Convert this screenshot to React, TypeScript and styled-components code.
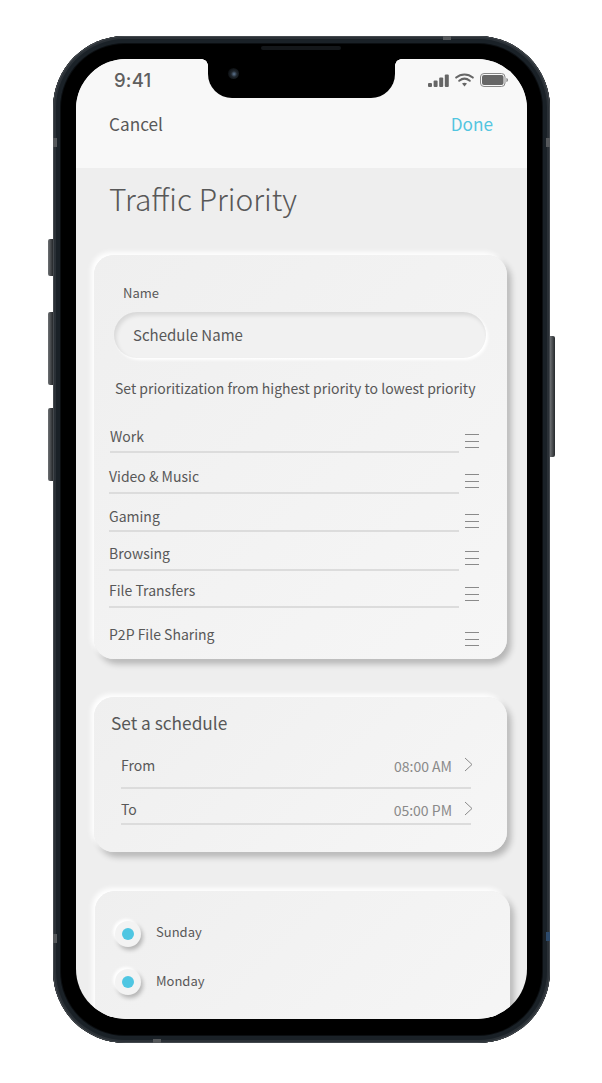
// Traffic priority schedule screen inside a phone mockup
import React from 'react';
import styled, { createGlobalStyle } from 'styled-components';

// Styles
const GlobalStyle = createGlobalStyle`
  html, body {
    margin: 0;
    padding: 0;
    background: #ffffff;
  }
`;

const Page = styled.div`
  width: 602px;
  height: 1083px;
  padding: 36px 0 0 53px;
  box-sizing: border-box;
  overflow: hidden;
  font-family: "Noto Sans CJK SC", "Noto Sans", sans-serif;
  color: #585858;
`;

const Phone = styled.div`
  position: relative;
  width: 497px;
  height: 1007px;
  box-sizing: border-box;
  padding: 23px;
  border-radius: 72px;
  background: #000000;
  box-shadow: inset 0 0 0 1px #43484d, inset 0 0 0 3px #2a3036, inset 0 0 0 7px #1a2127, inset 0 0 0 8px #0b0e11;
`;

const SideButton = styled.div<{ $side: 'left' | 'right'; $top: number; $height: number }>`
  position: absolute;
  top: ${p => p.$top}px;
  ${p => p.$side}: -5px;
  width: 5px;
  height: ${p => p.$height}px;
  border-radius: ${p => (p.$side === 'left' ? '2px 0 0 2px' : '0 2px 2px 0')};
  background: linear-gradient(90deg, #6d7073, #25282b);
`;

const Band = styled.div<{ $top?: number; $left?: number; $right?: number; $tone?: string }>`
  position: absolute;
  ${p => (p.$top !== undefined ? `top: ${p.$top}px;` : 'bottom: 0;')}
  ${p => (p.$left !== undefined ? `left: ${p.$left}px;` : '')}
  ${p => (p.$right !== undefined ? `right: ${p.$right}px;` : '')}
  width: ${p => (p.$top === 0 || p.$top === undefined ? 8 : 4)}px;
  height: ${p => (p.$top === 0 || p.$top === undefined ? 4 : 9)}px;
  background: ${p => p.$tone || '#55585b'};
`;

const Speaker = styled.div`
  position: absolute;
  top: 10px;
  left: 208px;
  width: 80px;
  height: 4px;
  border-radius: 2px;
  background: #14171a;
`;

const Screen = styled.div`
  position: relative;
  width: 451px;
  height: 960px;
  border-radius: 50px;
  overflow: hidden;
  background: #eeeeee;
`;

const Notch = styled.div`
  position: absolute;
  top: 0;
  left: 132px;
  width: 187px;
  height: 39px;
  background: #000000;
  border-radius: 0 0 24px 24px;
  z-index: 2;

  &::before,
  &::after {
    content: '';
    position: absolute;
    top: 0;
    width: 6px;
    height: 6px;
  }

  &::before {
    left: -6px;
    background: radial-gradient(circle at 0 100%, transparent 5.5px, #000000 6px);
  }

  &::after {
    right: -6px;
    background: radial-gradient(circle at 100% 100%, transparent 5.5px, #000000 6px);
  }
`;

const Camera = styled.div`
  position: absolute;
  top: 9px;
  left: 20px;
  width: 11px;
  height: 11px;
  border-radius: 50%;
  background: radial-gradient(circle at 55% 55%, #5d7590 0, #20262c 35%, #0c0f12 70%);
`;

const Header = styled.header`
  height: 109px;
  box-sizing: border-box;
  padding: 10px 34px 0 33px;
  background: #f8f8f8;
`;

const StatusBar = styled.div`
  display: flex;
  align-items: center;
  justify-content: space-between;
  height: 22px;
  margin-right: -15px;
`;

const Clock = styled.span`
  font-family: "Inter", "Liberation Sans", sans-serif;
  font-size: 18.5px;
  font-weight: 500;
  letter-spacing: 0.2px;
  color: #5f5f5f;
  margin-left: 5px;
`;

const StatusIcons = styled.div`
  display: flex;
  align-items: center;
  gap: 6px;
`;

const NavRow = styled.div`
  display: flex;
  justify-content: space-between;
  align-items: center;
  height: 28px;
  margin-top: 18px;
`;

const NavButton = styled.span<{ $accent?: boolean }>`
  font-size: 17.2px;
  color: ${p => (p.$accent ? '#52c5e0' : '#585858')};
`;

const Content = styled.main`
  padding: 6px 20px 0 18px;
`;

const Title = styled.h1`
  margin: 0 0 0 15px;
  height: 50px;
  line-height: 48px;
  font-size: 30px;
  font-weight: 300;
  color: #585858;
  white-space: nowrap;
`;

const Card = styled.section<{ $height: number; $top: number; $wide?: boolean }>`
  box-sizing: border-box;
  height: ${p => p.$height}px;
  margin-top: ${p => p.$top}px;
  margin-right: ${p => (p.$wide ? -3 : 0)}px;
  margin-left: ${p => (p.$wide ? 1 : 0)}px;
  border-radius: 20px;
  background: linear-gradient(135deg, #efefef 0%, #f6f6f6 100%);
  box-shadow: -3px -3px 5px #ffffff, 4px 5px 6px rgba(0, 0, 0, 0.24);
`;

const FieldLabel = styled.div`
  padding: 27px 0 0 29px;
  height: 21px;
  line-height: 21px;
  font-size: 13px;
`;

const NameField = styled.div`
  display: flex;
  align-items: center;
  box-sizing: border-box;
  height: 46px;
  margin: 9px 21px 0 20px;
  padding: 0 0 2px 19px;
  border-radius: 23px;
  font-size: 15px;
  background: #f1f1f1;
  box-shadow: inset 2px 3px 4px rgba(0, 0, 0, 0.11), 2px 2px 3px #ffffff;
`;

const Hint = styled.p`
  margin: 19px 0 0 21px;
  height: 22px;
  line-height: 22px;
  font-size: 14px;
  white-space: nowrap;
`;

const PriorityList = styled.div`
  margin: 20px 28px 0 15px;
`;

const PriorityRow = styled.div<{ $height: number }>`
  display: flex;
  align-items: flex-end;
  height: ${p => p.$height}px;
`;

const PriorityName = styled.div<{ $ruled?: boolean; $inset: number; $lift: number }>`
  flex: 1;
  margin-left: ${p => p.$inset}px;
  padding-bottom: ${p => p.$lift}px;
  line-height: 22px;
  font-size: 14px;
  border-bottom: 2px solid ${p => (p.$ruled ? '#dcdcdc' : 'transparent')};
`;

const GripIcon = styled.div<{ $lift: number }>`
  flex: none;
  box-sizing: border-box;
  width: 14px;
  height: 14px;
  margin: 0 0 ${p => p.$lift}px 6px;
  border-top: 1px solid #8a8a8a;
  border-bottom: 1px solid #8a8a8a;
  background: linear-gradient(#8a8a8a, #8a8a8a) center / 100% 1px no-repeat;
`;

const ScheduleTitle = styled.h2`
  margin: 0;
  padding: 14px 0 0 17px;
  height: 26px;
  line-height: 24px;
  font-size: 17.3px;
  font-weight: 400;
`;

const ScheduleRows = styled.div`
  margin: 0 36px 0 27px;
  padding-top: 3px;
`;

const ScheduleRow = styled.div<{ $height: number; $lift: number }>`
  display: flex;
  align-items: flex-end;
  height: ${p => p.$height}px;
  border-bottom: 2px solid #dcdcdc;
  box-sizing: border-box;
  padding-bottom: ${p => p.$lift}px;
  line-height: 20px;
  font-size: 14px;
`;

const RowLabel = styled.span`
  flex: 1;
`;

const RowValue = styled.span`
  margin-right: 12px;
  color: #8a8a8a;
  transform: translateY(1px);
`;

const Chevron = styled.svg`
  margin-bottom: 3px;
  margin-right: -2px;
`;

const DayList = styled.div`
  padding: 17px 0 0 20px;
`;

const DayRow = styled.div`
  display: flex;
  align-items: center;
  gap: 15px;
  height: 48.5px;
  font-size: 13px;
`;

const DayToggle = styled.div`
  display: flex;
  align-items: center;
  justify-content: center;
  width: 26px;
  height: 26px;
  margin-top: 3px;
  border-radius: 50%;
  background: #f3f3f3;
  box-shadow: -2px -2px 3px #ffffff, 2px 3px 4px rgba(0, 0, 0, 0.25);
`;

const DayDot = styled.div`
  width: 12px;
  height: 12px;
  border-radius: 50%;
  background: #4fc6e2;
`;

const DayName = styled.span`
  margin-top: -1px;
`;

const priorities = [
  { name: 'Work', height: 34, inset: 1, lift: 4, grip: 5 },
  { name: 'Video & Music', height: 41, inset: 0, lift: 5, grip: 6 },
  { name: 'Gaming', height: 38, inset: 0, lift: 3, grip: 4 },
  { name: 'Browsing', height: 39, inset: 0, lift: 5, grip: 6 },
  { name: 'File Transfers', height: 37, inset: 0, lift: 5, grip: 7 },
  { name: 'P2P File Sharing', height: 44, inset: 0, lift: 5, grip: 6 },
];

const SignalIcon = () => (
  <svg width="21" height="13" viewBox="0 0 21 13">
    <rect x="0" y="9" width="4" height="4" rx="1" fill="#666" />
    <rect x="5.600" y="6.500" width="4" height="6.500" rx="1" fill="#666" />
    <rect x="11.200" y="3.500" width="4" height="9.500" rx="1" fill="#666" />
    <rect x="16.800" y="0.500" width="4" height="12.500" rx="1" fill="#666" />
  </svg>
);

const WifiIcon = () => (
  <svg width="19" height="14" viewBox="0 0 19 14" fill="none" stroke="#666" strokeWidth="2" strokeLinecap="round">
    <path d="M1.200 4.600C6 .4 13 .4 17.800 4.600" />
    <path d="M4.200 7.800C7.400 5.200 11.600 5.200 14.800 7.800" />
    <path d="M9.500 13.500 7 10.600C8.400 9.500 10.600 9.500 12 10.600Z" fill="#666" stroke="none" />
  </svg>
);

const BatteryIcon = () => (
  <svg width="28" height="14" viewBox="0 0 28 14">
    <rect x="0.500" y="0.500" width="24.500" height="13" rx="3.500" fill="none" stroke="#888" />
    <rect x="2" y="2" width="21.500" height="10" rx="2" fill="#666" />
    <path d="M26.400 5v4c1-.3 1.600-1 1.600-2s-.6-1.700-1.600-2Z" fill="#888" />
  </svg>
);

const ChevronIcon = () => (
  <Chevron width="9" height="15" viewBox="0 0 9 15" fill="none" stroke="#8a8a8a" strokeWidth="1">
    <path d="M1 1l7 6.500-7 6.500" />
  </Chevron>
);

// Main component
const App = () => {
  return (
    <Page>
      <GlobalStyle />
      <Phone>
        <SideButton $side="left" $top={203} $height={37} />
        <SideButton $side="left" $top={276} $height={73} />
        <SideButton $side="left" $top={372} $height={73} />
        <SideButton $side="right" $top={300} $height={121} />
        <Band $top={102} $left={0} />
        <Band $top={102} $right={0} />
        <Band $top={898} $left={0} />
        <Band $top={896} $right={0} $tone="#2d4a6b" />
        <Band $top={0} $right={99} />
        <Band $left={100} />
        <Speaker />
        <Screen>
          <Notch>
            <Camera />
          </Notch>
          <Header>
            <StatusBar>
              <Clock>9:41</Clock>
              <StatusIcons>
                <SignalIcon />
                <WifiIcon />
                <BatteryIcon />
              </StatusIcons>
            </StatusBar>
            <NavRow>
              <NavButton>Cancel</NavButton>
              <NavButton $accent>Done</NavButton>
            </NavRow>
          </Header>
          <Content>
            <Title>Traffic Priority</Title>
            <Card $height={404} $top={31}>
              <FieldLabel>Name</FieldLabel>
              <NameField>Schedule Name</NameField>
              <Hint>Set prioritization from highest priority to lowest priority</Hint>
              <PriorityList>
                {priorities.map((item, index) => (
                  <PriorityRow key={item.name} $height={item.height}>
                    <PriorityName $ruled={index < priorities.length - 1} $inset={item.inset} $lift={item.lift}>
                      {item.name}
                    </PriorityName>
                    <GripIcon $lift={item.grip} />
                  </PriorityRow>
                ))}
              </PriorityList>
            </Card>
            <Card $height={155} $top={38}>
              <ScheduleTitle>Set a schedule</ScheduleTitle>
              <ScheduleRows>
                <ScheduleRow $height={49} $lift={12}>
                  <RowLabel>From</RowLabel>
                  <RowValue>08:00 AM</RowValue>
                  <ChevronIcon />
                </ScheduleRow>
                <ScheduleRow $height={36} $lift={4}>
                  <RowLabel>To</RowLabel>
                  <RowValue>05:00 PM</RowValue>
                  <ChevronIcon />
                </ScheduleRow>
              </ScheduleRows>
            </Card>
            <Card $height={180} $top={39} $wide>
              <DayList>
                <DayRow>
                  <DayToggle>
                    <DayDot />
                  </DayToggle>
                  <DayName>Sunday</DayName>
                </DayRow>
                <DayRow>
                  <DayToggle>
                    <DayDot />
                  </DayToggle>
                  <DayName>Monday</DayName>
                </DayRow>
              </DayList>
            </Card>
          </Content>
        </Screen>
      </Phone>
    </Page>
  );
};

export default App;
